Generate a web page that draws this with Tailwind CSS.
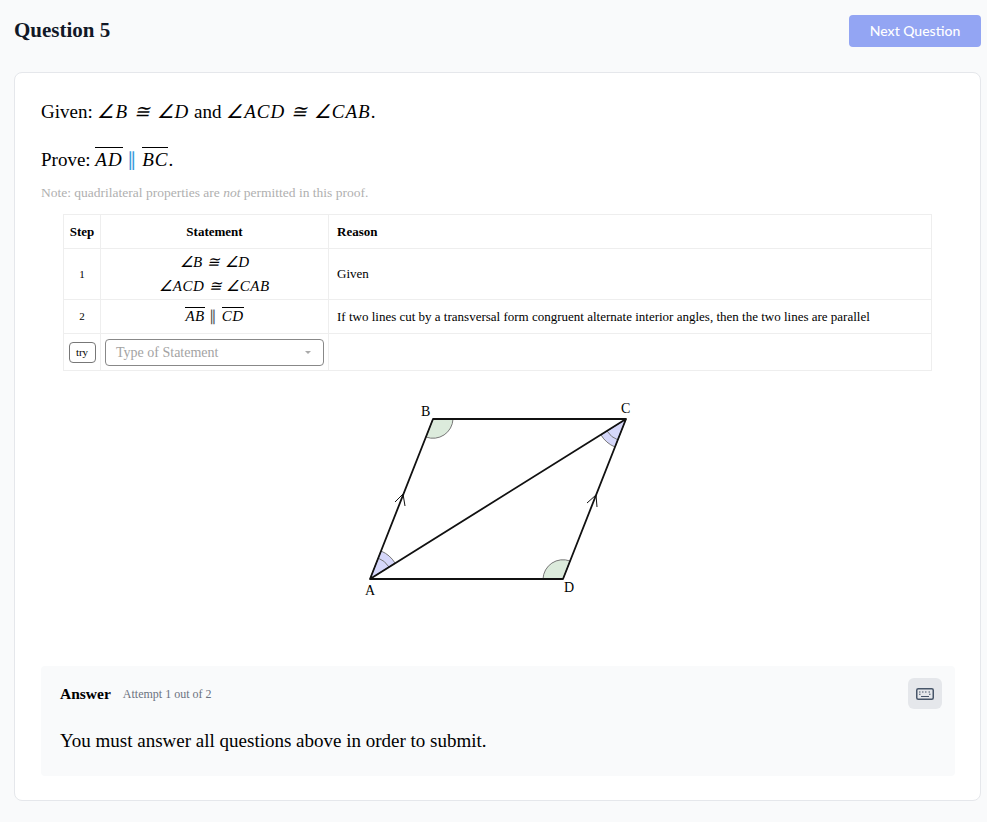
<!DOCTYPE html>
<html lang="en">
<head>
  <meta charset="UTF-8" />
  <title>Question 5</title>
  <script src="https://cdn.jsdelivr.net/npm/@tailwindcss/browser@4"></script>
</head>
<body class="bg-[#f9fafb] text-black font-['Liberation_Serif',serif]">
  <div class="w-[987px] h-[822px] overflow-hidden px-[14px] pt-[15px] box-border">
    <!-- Header -->
    <div class="flex items-center justify-between mr-[-8px] w-[967px] h-8">
      <h1 class="text-[21px] font-bold text-[#111827]">Question 5</h1>
      <button class="w-[132px] h-8 rounded bg-[#93a5f3] text-white text-sm font-['Lato',sans-serif] font-medium">Next Question</button>
    </div>

    <!-- Card -->
    <div class="mt-[25px] w-[967px] h-[729px] bg-white border border-[#e5e7eb] rounded-lg px-[26px] pt-[26px]">
      <p class="text-[19px] leading-[26px] h-[26px]">Given: <span class="italic tracking-[1px]">∠B ≅ ∠D</span> and <span class="italic tracking-[1px]">∠ACD ≅ ∠CAB</span>.</p>
      <p class="mt-[22px] text-[19px] leading-[26px] h-[26px]">Prove: <span class="italic border-t border-black pt-[1px] tracking-[1px]">AD</span> <span class="text-[#3b9bdc]">∥</span> <span class="italic border-t border-black pt-[1px] tracking-[1px]">BC</span>.</p>
      <p class="mt-[11px] text-[13.5px] leading-[18px] font-medium text-[#b0b0b0]">Note: quadrilateral properties are <em>not</em> permitted in this proof.</p>

      <!-- Proof table -->
      <table class="mt-[12px] ml-[22px] w-[869px] table-fixed border-collapse text-[13px]">
        <colgroup>
          <col class="w-[37px]" />
          <col class="w-[228px]" />
          <col />
        </colgroup>
        <tbody>
          <tr class="h-[34px] font-bold">
            <td class="border border-[#eeeeee] text-center">Step</td>
            <td class="border border-[#eeeeee] text-center">Statement</td>
            <td class="border border-[#eeeeee] pl-2">Reason</td>
          </tr>
          <tr class="h-[51px]">
            <td class="border border-[#eeeeee] text-center text-[11px]">1</td>
            <td class="border border-[#eeeeee] text-center text-[15px] leading-[24px] italic tracking-[0.5px]">
              <div>∠B ≅ ∠D</div>
              <div>∠ACD ≅ ∠CAB</div>
            </td>
            <td class="border border-[#eeeeee] pl-2">Given</td>
          </tr>
          <tr class="h-[34px]">
            <td class="border border-[#eeeeee] text-center text-[11px]">2</td>
            <td class="border border-[#eeeeee] text-center text-[15px] italic tracking-[0.5px]"><span class="border-t border-black">AB</span> <span class="not-italic text-[#555555]">∥</span> <span class="border-t border-black">CD</span></td>
            <td class="border border-[#eeeeee] pl-2">If two lines cut by a transversal form congruent alternate interior angles, then the two lines are parallel</td>
          </tr>
          <tr class="h-[37px]">
            <td class="border border-[#eeeeee] text-center">
              <button class="block mx-auto w-[27px] h-[21px] border border-[#777777] rounded text-[11px] leading-none">try</button>
            </td>
            <td class="border border-[#eeeeee] px-1">
              <div class="flex items-center justify-between h-[27px] border border-[#888888] rounded pl-[10px] pr-[12px] text-[14px] text-[#a3a3a3]">
                <span>Type of Statement</span>
                <span class="w-0 h-0 border-x-[3px] border-x-transparent border-t-[3px] border-t-[#aaaaaa]"></span>
              </div>
            </td>
            <td class="border border-[#eeeeee]"></td>
          </tr>
        </tbody>
      </table>

      <!-- Diagram -->
      <svg class="block mt-[21px] ml-[307px]" width="300" height="215" viewBox="348 390 300 215" font-family="Liberation Serif, serif" font-size="14">
        <path d="M433 417 L453 417 A20 20 0 0 1 426 435 Z" fill="#dcebdc" stroke="#777777" />
        <path d="M563 577 L543 577 A20 20 0 0 1 570 559 Z" fill="#dcebdc" stroke="#777777" />
        <path d="M370 577 L381 549 A30 30 0 0 1 395 561 Z" fill="#d5d7fa" stroke="#777777" />
        <path d="M378 556 A22 22 0 0 1 389 565" fill="none" stroke="#777777" />
        <path d="M626 417 L615 445 A30 30 0 0 1 601 433 Z" fill="#d5d7fa" stroke="#777777" />
        <path d="M618 438 A22 22 0 0 1 607 429" fill="none" stroke="#777777" />
        <path d="M370 577 L433 417 L626 417 L563 577 Z M370 577 L626 417" fill="none" stroke="#111111" stroke-width="1.8" stroke-linejoin="round" />
        <path d="M395 500 L403 492 L405 504" fill="none" stroke="#111111" stroke-width="1" />
        <path d="M587 501 L596 493 L597 505" fill="none" stroke="#111111" stroke-width="1" />
        <text x="421" y="414">B</text>
        <text x="621" y="411">C</text>
        <text x="365" y="593">A</text>
        <text x="564" y="590">D</text>
      </svg>

      <!-- Answer box -->
      <div class="mt-[59px] w-[914px] h-[110px] bg-[#f9fafb] rounded px-[19px] pt-3 relative">
        <div class="flex items-center h-[31px] gap-3">
          <span class="text-[15.5px] font-bold">Answer</span>
          <span class="text-[12px] text-[#6b7280] font-medium">Attempt 1 out of 2</span>
        </div>
        <p class="mt-[20px] text-[19px] leading-6">You must answer all questions above in order to submit.</p>
        <button class="absolute right-[13px] top-3 w-[34px] h-[31px] rounded-md bg-[#e5e7eb] flex items-center justify-center">
          <svg width="18" height="12" viewBox="0 0 18 12" fill="none">
            <rect x="0.75" y="0.75" width="16.5" height="10.5" rx="1.5" stroke="#475569" stroke-width="1.5" />
            <path d="M3 4h1.5M6 4h1.5M9 4h1.5M12.5 4H14M3 6.2h1.5M13 6.2h1.5M5 8.5h8" stroke="#475569" stroke-width="1.1" />
          </svg>
        </button>
      </div>
    </div>
  </div>
</body>
</html>
